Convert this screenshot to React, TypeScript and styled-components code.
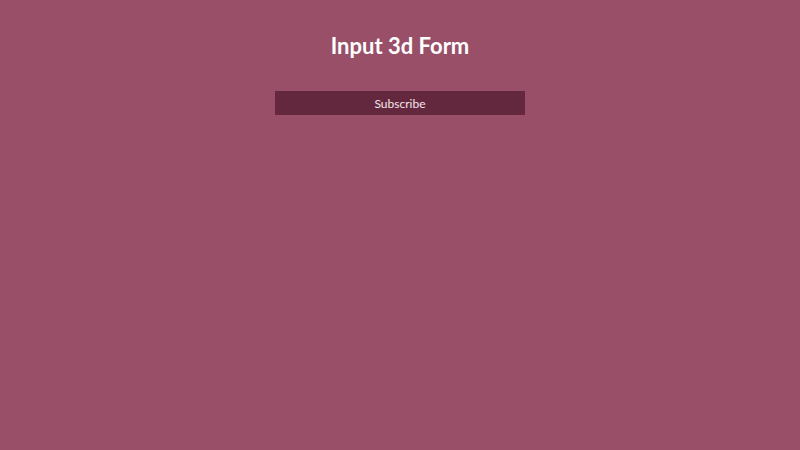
import React from 'react';
import styled, { createGlobalStyle } from 'styled-components';

const GlobalStyle = createGlobalStyle`
  html, body {
    margin: 0;
    padding: 0;
    background: #9a4f69;
    font-family: 'Lato', 'Open Sans', sans-serif;
  }
`;

const Page = styled.div`
  min-height: 450px;
  display: flex;
  flex-direction: column;
  align-items: center;
  padding-top: 32px;
  box-sizing: border-box;
`;

const Title = styled.h1`
  margin: 0;
  color: #fff;
  font-size: 22px;
  font-weight: 700;
  line-height: 28px;
`;

const Form = styled.form`
  margin-top: 31px;
  width: 250px;
`;

const SubmitButton = styled.button`
  width: 100%;
  height: 24px;
  border: none;
  background: #64283e;
  color: #f3e4ea;
  font-family: 'Lato', sans-serif;
  font-size: 12px;
  cursor: pointer;
  padding: 0;
`;

const App: React.FC = () => (
  <>
    <GlobalStyle />
    <Page>
      <Title>Input 3d Form</Title>
      <Form onSubmit={(e) => e.preventDefault()}>
        <SubmitButton type="submit">Subscribe</SubmitButton>
      </Form>
    </Page>
  </>
);

export default App;
